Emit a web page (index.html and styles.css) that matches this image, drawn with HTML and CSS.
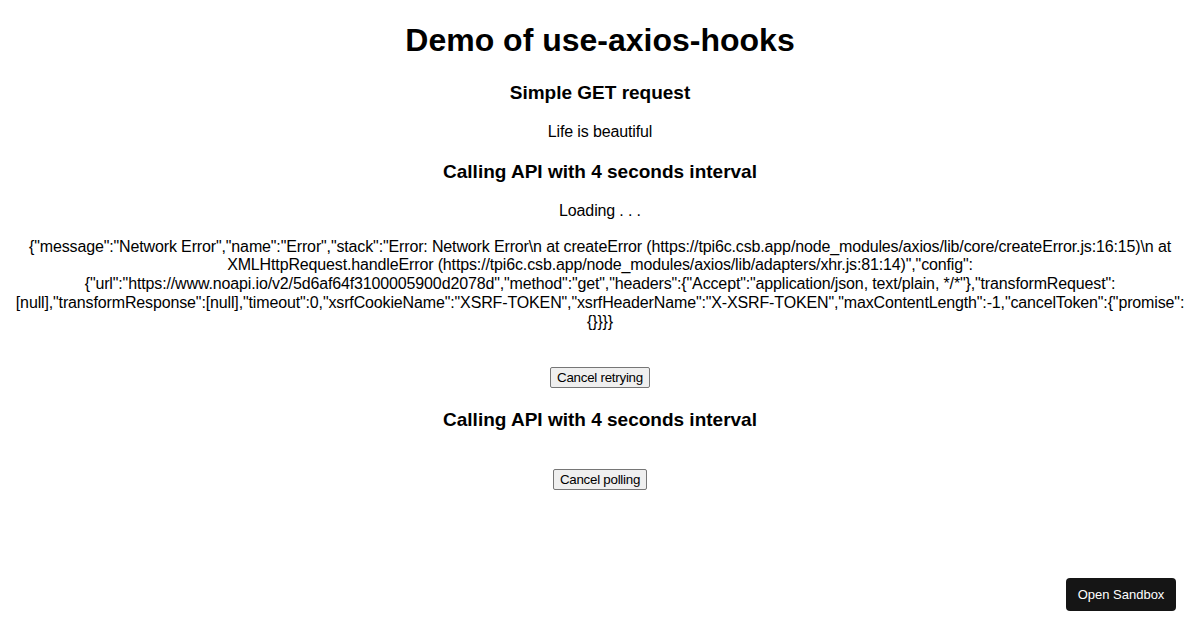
FILE: index.html
```html
<!DOCTYPE html>
<html lang="en">
<head>
    <meta charset="UTF-8">
    <meta name="viewport" content="width=device-width, initial-scale=1.0">
    <title>use-axios-hooks demo</title>
    <link rel="stylesheet" href="styles.css">
</head>
<body>
    <div class="App">
        <h1>Demo of use-axios-hooks</h1>

        <h3>Simple GET request</h3>
        <p>Life is beautiful</p>

        <h3>Calling API with 4 seconds interval</h3>
        <p>Loading . . .</p>
        <p class="error">{"message":"Network Error","name":"Error","stack":"Error: Network Error\n at createError (https://tpi6c.csb.app/node_modules/axios/lib/core/createError.js:16:15)\n at XMLHttpRequest.handleError (https://tpi6c.csb.app/node_modules/axios/lib/adapters/xhr.js:81:14)","config":{"url":"https://www.noapi.io/v2/5d6af64f3100005900d2078d","method":"get","headers":{"Accept":"application/json, text/plain, */*"},"transformRequest":[null],"transformResponse":[null],"timeout":0,"xsrfCookieName":"XSRF-TOKEN","xsrfHeaderName":"X-XSRF-TOKEN","maxContentLength":-1,"cancelToken":{"promise":{}}}}</p>
        <div class="actions">
            <button type="button">Cancel retrying</button>
        </div>

        <h3 class="polling">Calling API with 4 seconds interval</h3>
        <div class="actions">
            <button type="button">Cancel polling</button>
        </div>
    </div>

    <a class="open-sandbox" href="#">Open Sandbox</a>
</body>
</html>
```

FILE: styles.css
```css
body {
    margin: 8px;
    background-color: #ffffff;
    color: #000000;
}

.App {
    font-family: "Liberation Sans", Arial, sans-serif;
    text-align: center;
}

h1 {
    font-size: 32px;
    line-height: 37px;
    margin: 14px 0 23px;
}

h3 {
    font-size: 19px;
    line-height: 22px;
    margin: 19px 0;
}

h3.polling {
    margin-top: 21px;
}

p {
    font-size: 16px;
    line-height: 18.75px;
    letter-spacing: -0.14px;
    margin: 17px 0;
}

.error {
    word-break: break-word;
}

.actions {
    padding-top: 19px;
}

button {
    font-family: "Liberation Sans", Arial, sans-serif;
    font-size: 13.33px;
    letter-spacing: -0.25px;
    color: #000000;
    background-color: #efefef;
    border: 1px solid #767676;
    border-radius: 2px;
    padding: 2px 6px;
}

.open-sandbox {
    position: fixed;
    right: 24px;
    bottom: 19px;
    display: block;
    width: 110px;
    height: 33px;
    line-height: 33px;
    box-sizing: border-box;
    text-align: center;
    background-color: #151515;
    color: #ffffff;
    border-radius: 4px;
    font-family: "Liberation Sans", Arial, sans-serif;
    font-size: 13px;
    text-decoration: none;
}
```
